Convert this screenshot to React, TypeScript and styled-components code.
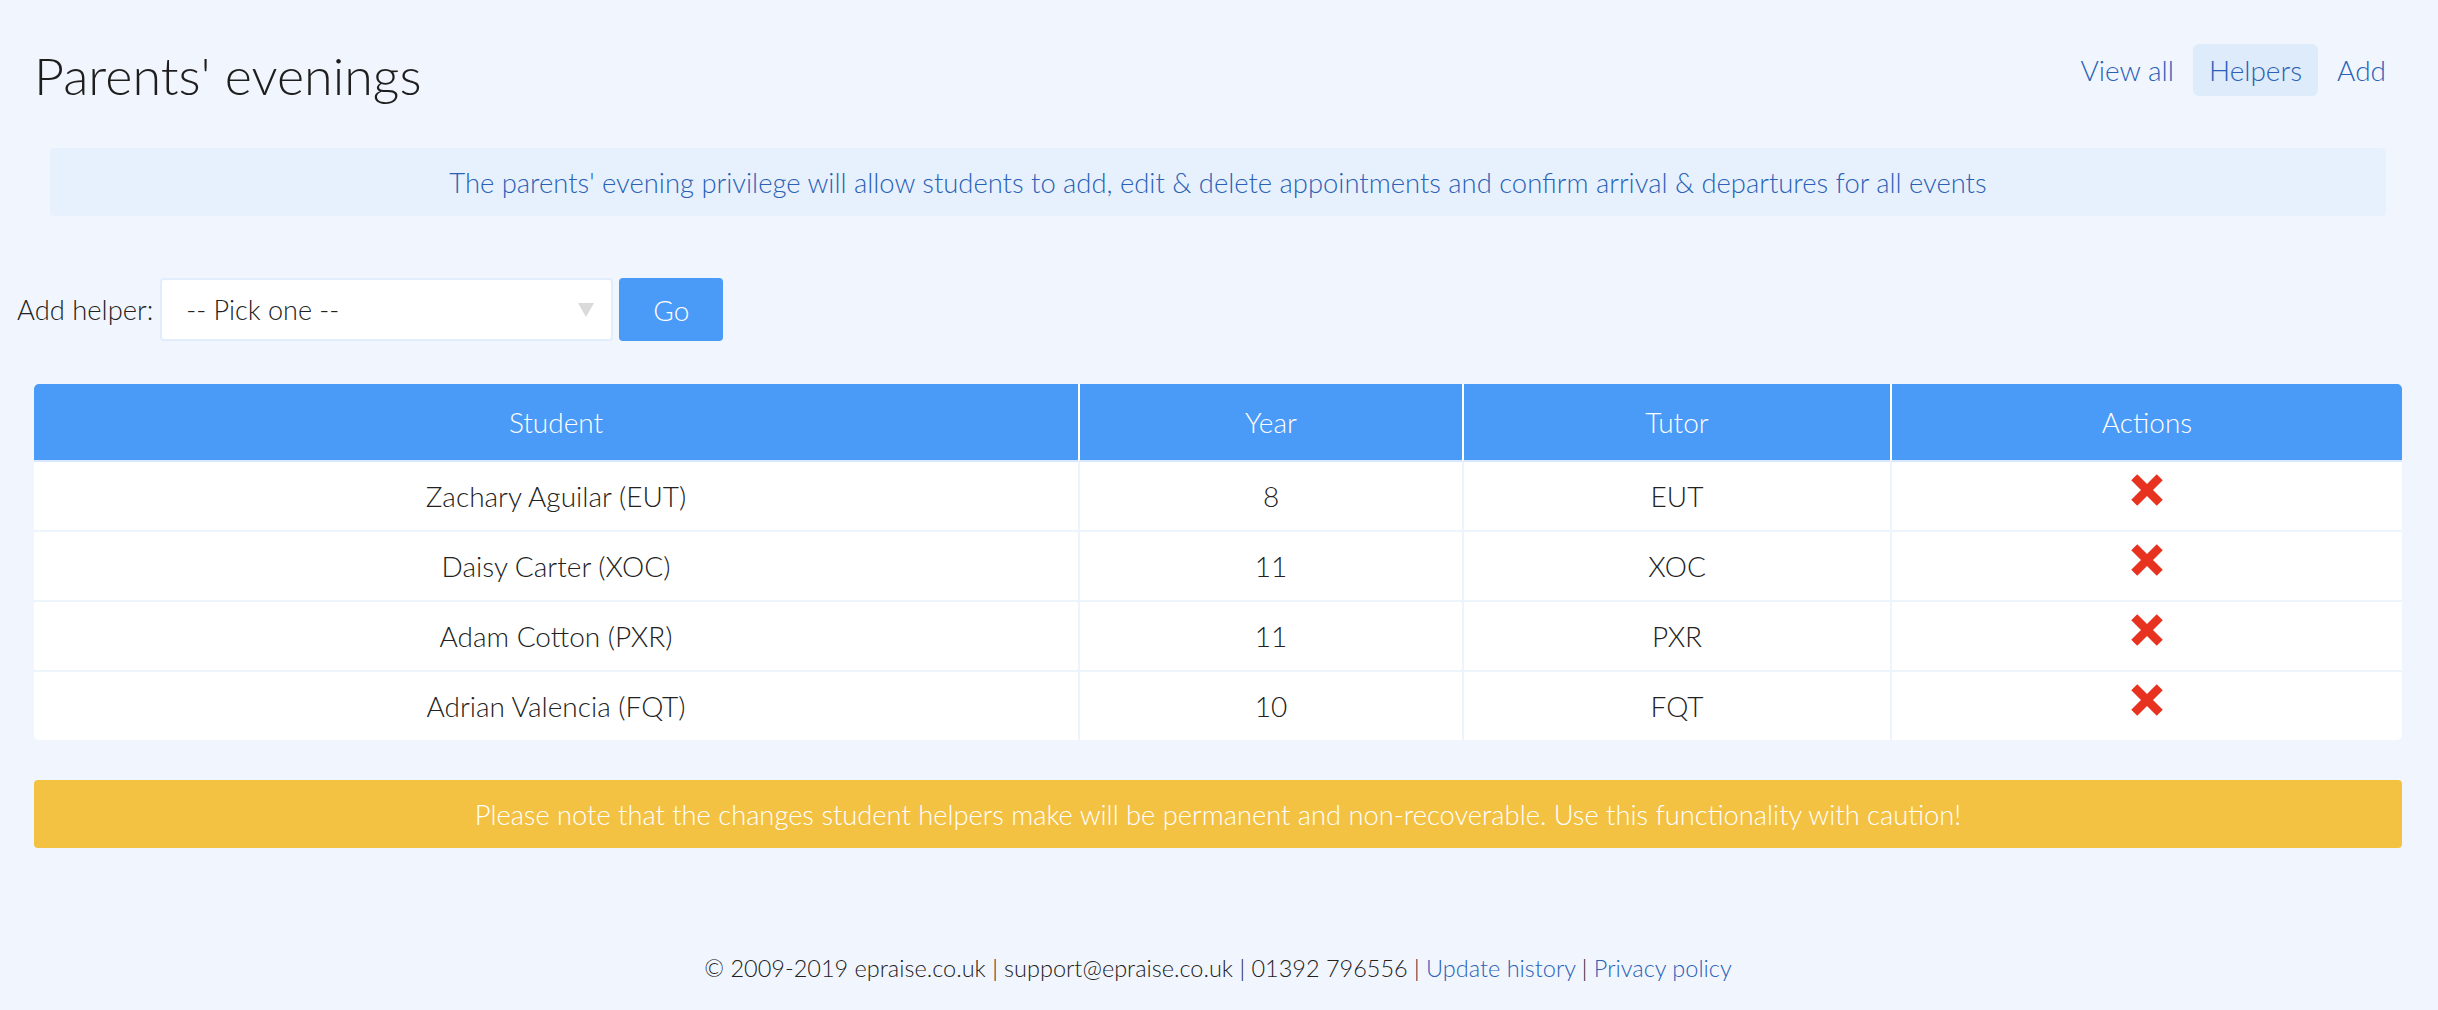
import React from 'react';
import styled, { createGlobalStyle } from 'styled-components';

const GlobalStyle = createGlobalStyle`
	html, body {
		margin: 0;
		padding: 0;
		background: #f1f6fe;
	}
	body {
		font-family: Lato, 'Open Sans', 'Liberation Sans', sans-serif;
		font-weight: 300;
		color: #222;
	}
`;

const Page = styled.div`
	padding: 0 36px 0 34px;
	min-height: 1010px;
	box-sizing: border-box;
`;

const Header = styled.div`
	display: flex;
	justify-content: space-between;
	align-items: flex-start;
	padding-top: 44px;
	height: 52px;
`;

const Title = styled.h1`
	margin: 0;
	font-size: 52px;
	line-height: 62px;
	font-weight: 300;
	color: #1e1e1e;
`;

const Nav = styled.nav`
	display: flex;
	gap: 3px;
`;

const NavItem = styled.a<{ $active?: boolean }>`
	display: block;
	height: 52px;
	line-height: 52px;
	padding: 0 16px;
	font-size: 28px;
	color: #2a61b7;
	text-decoration: none;
	border-radius: 6px;
	background: ${(p) => (p.$active ? '#deebfb' : 'transparent')};
`;

const InfoAlert = styled.div`
	margin: 52px 16px 0 16px;
	height: 68px;
	display: flex;
	align-items: center;
	justify-content: center;
	background: #e7f1fd;
	border-radius: 4px;
	color: #2a61b7;
	font-size: 27.4px;
`;

const HelperForm = styled.form`
	display: flex;
	align-items: center;
	margin: 62px 0 0 -17px;
	height: 63px;
`;

const Label = styled.label`
	font-size: 27.4px;
	margin-right: 7px;
`;

const Select = styled.div`
	position: relative;
	width: 453px;
	height: 63px;
	box-sizing: border-box;
	border: 2px solid #e1edfc;
	border-radius: 4px;
	background: #fff;
	display: flex;
	align-items: center;
	padding-left: 24px;
	font-size: 27px;
`;

const Caret = styled.span`
	position: absolute;
	right: 17px;
	top: 23px;
	width: 0;
	height: 0;
	border-left: 8px solid transparent;
	border-right: 8px solid transparent;
	border-top: 14px solid #dadada;
`;

const GoButton = styled.button`
	margin-left: 6px;
	width: 104px;
	height: 63px;
	border: none;
	border-radius: 4px;
	background: #4a9af7;
	color: #fff;
	font-family: inherit;
	font-weight: 300;
	font-size: 28px;
`;

const Table = styled.table`
	margin-top: 43px;
	width: 100%;
	border-collapse: separate;
	border-spacing: 0;
	table-layout: fixed;
	background: #fff;
	border-radius: 5px;
	overflow: hidden;
`;

const Th = styled.th`
	height: 74px;
	background: #4a9af7;
	color: #fff;
	font-weight: 300;
	font-size: 28px;
	border-bottom: 2px solid #d7e8fd;
	border-left: 2px solid #fff;
	&:first-child {
		border-left: none;
	}
`;

const Td = styled.td`
	height: 68px;
	text-align: center;
	font-size: 28px;
	border-left: 2px solid #eef4fc;
	border-top: 2px solid #eef4fc;
	padding: 0;
	&:first-child {
		border-left: none;
	}
	tr:first-child > & {
		border-top: none;
	}
`;

const RemoveIcon = styled.svg`
	display: block;
	margin: -12px auto 0;
	width: 34px;
	height: 34px;
`;

const Warning = styled.div`
	margin-top: 40px;
	height: 68px;
	display: flex;
	align-items: center;
	justify-content: center;
	background: #f4c243;
	border-radius: 4px;
	color: #fff;
	font-size: 27.3px;
`;

const Footer = styled.footer`
	margin-top: 106px;
	text-align: center;
	font-size: 23.5px;
	line-height: 1.2;
	a {
		color: #2a61b7;
		text-decoration: none;
	}
`;

const helpers = [
	{ name: 'Zachary Aguilar (EUT)', year: '8', tutor: 'EUT' },
	{ name: 'Daisy Carter (XOC)', year: '11', tutor: 'XOC' },
	{ name: 'Adam Cotton (PXR)', year: '11', tutor: 'PXR' },
	{ name: 'Adrian Valencia (FQT)', year: '10', tutor: 'FQT' },
];

function Cross() {
	return (
		<RemoveIcon viewBox="0 0 32 32">
			<path d="M4 4 L28 28 M28 4 L4 28" stroke="#e6321f" strokeWidth="8" strokeLinecap="butt" />
		</RemoveIcon>
	);
}

export default function App() {
	return (
		<>
			<GlobalStyle />
			<Page>
				<Header>
					<Title>Parents' evenings</Title>
					<Nav>
						<NavItem>View all</NavItem>
						<NavItem $active>Helpers</NavItem>
						<NavItem>Add</NavItem>
					</Nav>
				</Header>

				<InfoAlert>
					The parents' evening privilege will allow students to add, edit &amp; delete appointments and confirm arrival &amp; departures for all events
				</InfoAlert>

				<HelperForm onSubmit={(e) => e.preventDefault()}>
					<Label>Add helper:</Label>
					<Select>
						-- Pick one --
						<Caret />
					</Select>
					<GoButton type="submit">Go</GoButton>
				</HelperForm>

				<Table>
					<colgroup>
						<col style={{ width: 1044 }} />
						<col style={{ width: 384 }} />
						<col style={{ width: 428 }} />
						<col style={{ width: 512 }} />
					</colgroup>
					<thead>
						<tr>
							<Th>Student</Th>
							<Th>Year</Th>
							<Th>Tutor</Th>
							<Th>Actions</Th>
						</tr>
					</thead>
					<tbody>
						{helpers.map((h) => (
							<tr key={h.name}>
								<Td>{h.name}</Td>
								<Td>{h.year}</Td>
								<Td>{h.tutor}</Td>
								<Td>
									<Cross />
								</Td>
							</tr>
						))}
					</tbody>
				</Table>

				<Warning>
					Please note that the changes student helpers make will be permanent and non-recoverable. Use this functionality with caution!
				</Warning>

				<Footer>
					© 2009-2019 epraise.co.uk | support@epraise.co.uk | 01392 796556 | <a href="#">Update history</a> |{' '}
					<a href="#">Privacy policy</a>
				</Footer>
			</Page>
		</>
	);
}
